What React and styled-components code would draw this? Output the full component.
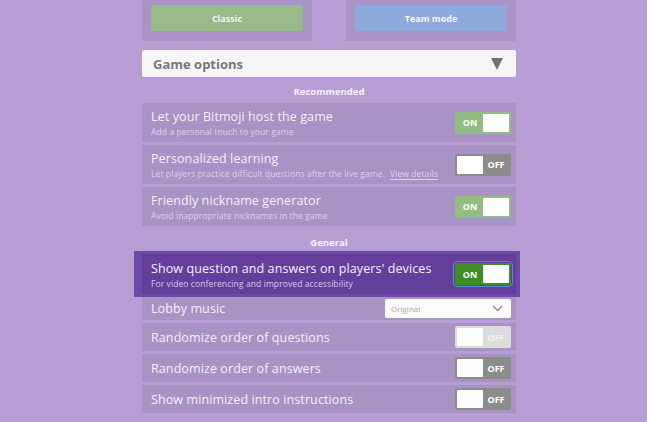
import React from 'react'
import styled, { createGlobalStyle } from 'styled-components'

const Global = createGlobalStyle`
  body {
    margin: 0;
    background: #b79fd5;
    font-family: "Open Sans", "Noto Sans", sans-serif;
  }
`

const Page = styled.div`
  width: 647px;
  height: 422px;
  overflow: hidden;
  padding-left: 142px;
  box-sizing: border-box;
`

const Column = styled.div`
  width: 374px;
  display: flex;
  flex-direction: column;
`

const ModeRow = styled.div`
  display: flex;
  justify-content: space-between;
`

const ModeCard = styled.div`
  width: 170px;
  height: 41px;
  box-sizing: border-box;
  padding: 5px 9px 0;
  background: #a994c6;
`

const ModeButton = styled.div`
  height: 26px;
  border-radius: 2px;
  background: ${p => p.color};
  color: #f4f4f4;
  font-size: 9px;
  font-weight: 700;
  display: flex;
  align-items: center;
  justify-content: center;
`

const OptionsBar = styled.div`
  margin-top: 9px;
  height: 27px;
  background: #f6f6f6;
  border-radius: 2px;
  display: flex;
  align-items: center;
  justify-content: space-between;
  padding: 0 11px;
  color: #787878;
  font-size: 13px;
  font-weight: 700;
`

const Arrow = styled.span`
  width: 0;
  height: 0;
  border-left: 6px solid transparent;
  border-right: 6px solid transparent;
  border-top: 12px solid #727272;
  margin-right: 2px;
`

const Heading = styled.div`
  height: ${p => p.h}px;
  box-sizing: border-box;
  padding-top: ${p => p.top || 0}px;
  display: flex;
  align-items: center;
  justify-content: center;
  color: #f5f0fb;
  font-size: 9.5px;
  font-weight: 700;
`

const List = styled.div`
  display: flex;
  flex-direction: column;
  gap: ${p => p.gap || 3}px;
`

const Row = styled.div`
  height: ${p => p.h}px;
  box-sizing: border-box;
  padding: 0 5px 0 9px;
  display: flex;
  align-items: center;
  justify-content: space-between;
  background: ${p => (p.active ? '#633f9b' : '#a893c5')};
`

const Highlight = styled.div`
  margin: 0 -4px 0 -8px;
  padding: 3px 4px 3px 8px;
  background: #6d4aa7;
`

const Texts = styled.div`
  display: flex;
  flex-direction: column;
  gap: 1px;
`

const Title = styled.div`
  color: #f4eff9;
  font-size: 12.5px;
  font-weight: 500;
  letter-spacing: 0.1px;
`

const Desc = styled.div`
  color: ${p => (p.active ? '#d4c6ea' : '#ddd2ec')};
  font-size: 8.5px;
  letter-spacing: 0.1px;
`

const DetailLink = styled.span`
  margin-left: 5px;
  text-decoration: underline;
  text-underline-offset: 2px;
`

const Track = styled.div`
  width: 56px;
  height: 22px;
  box-sizing: border-box;
  display: flex;
  flex-direction: ${p => (p.on ? 'row' : 'row-reverse')};
  align-items: center;
  justify-content: space-between;
  padding: 2px;
  border-radius: 2px;
  background: ${p => p.bg};
  ${p => p.focus && 'outline: 1.5px solid #5a86d6; outline-offset: 1px;'}
`

const TrackLabel = styled.span`
  flex: 1;
  text-align: center;
  color: ${p => p.fg};
  font-size: 9px;
  font-weight: 700;
`

const Knob = styled.span`
  width: 26px;
  height: 18px;
  border-radius: 1px;
  background: #ffffff;
`

const Select = styled.div`
  width: 126px;
  height: 19px;
  box-sizing: border-box;
  background: #fbfbfb;
  border-radius: 2px;
  display: flex;
  align-items: center;
  justify-content: space-between;
  padding: 0 8px 0 6px;
  color: #a9a9a9;
  font-size: 8px;
`

function Toggle({ on, variant, focus }) {
  const bgs = {
    on: '#93bd82',
    off: '#8c8c8c',
    disabled: '#dcdcdc',
    strong: '#3f8c24',
  }
  const fg = variant === 'disabled' ? '#f3f3f3' : '#ffffff'
  return (
    <Track on={on} bg={bgs[variant]} focus={focus}>
      <TrackLabel fg={fg}>{on ? 'ON' : 'OFF'}</TrackLabel>
      <Knob />
    </Track>
  )
}

export default function App() {
  return (
    <Page>
      <Global />
      <Column>
        <ModeRow>
          <ModeCard>
            <ModeButton color="#98bb89">Classic</ModeButton>
          </ModeCard>
          <ModeCard>
            <ModeButton color="#8eaadd">Team mode</ModeButton>
          </ModeCard>
        </ModeRow>
        <OptionsBar>
          Game options
          <Arrow />
        </OptionsBar>
        <Heading h={26} top={2}>Recommended</Heading>
        <List>
          <Row h={39}>
            <Texts>
              <Title>Let your Bitmoji host the game</Title>
              <Desc>Add a personal touch to your game</Desc>
            </Texts>
            <Toggle on variant="on" />
          </Row>
          <Row h={39}>
            <Texts>
              <Title>Personalized learning</Title>
              <Desc>
                Let players practice difficult questions after the live game.
                <DetailLink>View details</DetailLink>
              </Desc>
            </Texts>
            <Toggle variant="off" />
          </Row>
          <Row h={39}>
            <Texts>
              <Title>Friendly nickname generator</Title>
              <Desc>Avoid inappropriate nicknames in the game</Desc>
            </Texts>
            <Toggle on variant="on" />
          </Row>
        </List>
        <Heading h={25} top={8}>General</Heading>
        <Highlight>
          <Row h={40} active>
            <Texts>
              <Title>Show question and answers on players' devices</Title>
              <Desc active>For video conferencing and improved accessibility</Desc>
            </Texts>
            <Toggle on variant="strong" focus />
          </Row>
        </Highlight>
        <List gap={3}>
          <Row h={23}>
            <Title>Lobby music</Title>
            <Select>
              Original
              <svg width="11" height="7" viewBox="0 0 11 7">
                <path d="M1 1l4.5 4.5L10 1" fill="none" stroke="#8a8a8a" strokeWidth="1.3" />
              </svg>
            </Select>
          </Row>
          <Row h={28}>
            <Title>Randomize order of questions</Title>
            <Toggle variant="disabled" />
          </Row>
          <Row h={28}>
            <Title>Randomize order of answers</Title>
            <Toggle variant="off" />
          </Row>
          <Row h={28}>
            <Title>Show minimized intro instructions</Title>
            <Toggle variant="off" />
          </Row>
        </List>
      </Column>
    </Page>
  )
}
